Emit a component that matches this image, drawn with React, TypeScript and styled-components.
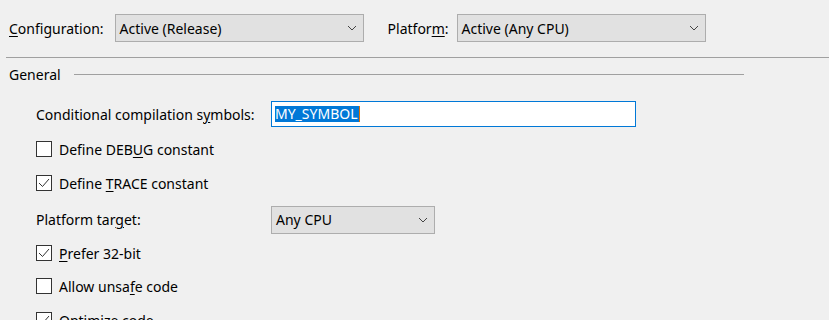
import React from 'react';
import styled, { createGlobalStyle } from 'styled-components';

const GlobalStyle = createGlobalStyle`
  html, body {
    margin: 0;
    padding: 0;
    background: #f0f0f0;
  }
  body {
    font-family: 'Noto Sans', 'Open Sans', sans-serif;
    font-size: 14px;
    color: #000;
  }
  u {
    text-decoration-thickness: 1px;
    text-underline-offset: 2px;
  }
`;

const Page = styled.div`
  width: 829px;
  height: 320px;
  overflow: hidden;
`;

const Toolbar = styled.div`
  display: flex;
  align-items: center;
  height: 28px;
  padding: 14px 0 0 9px;
`;

const ToolLabel = styled.span`
  margin-right: ${(p: { $space: number }) => p.$space}px;
  white-space: nowrap;
`;

const Combo = styled.div<{ $width: number }>`
  box-sizing: border-box;
  display: flex;
  align-items: center;
  justify-content: space-between;
  width: ${(p) => p.$width}px;
  height: 28px;
  padding: 0 6px 0 4px;
  background: #e1e1e1;
  border: 1px solid #adadad;
  margin-right: ${(p) => (p.$width > 200 ? 24 : 0)}px;
`;

const Separator = styled.div`
  height: 1px;
  background: #a0a0a0;
  margin: 15px 0 0 6px;
`;

const GroupHeader = styled.div`
  display: flex;
  align-items: center;
  width: 735px;
  padding: 5px 0 0 9px;
  height: 22px;
  &::after {
    content: '';
    flex: 1;
    height: 1px;
    background: #a0a0a0;
    margin-left: 13px;
    margin-top: 1px;
  }
`;

const Content = styled.div`
  display: flex;
  flex-direction: column;
  padding-left: 36px;
`;

const Row = styled.div<{ $top: number; $height: number }>`
  display: flex;
  align-items: center;
  height: ${(p) => p.$height}px;
  margin-top: ${(p) => p.$top}px;
`;

const FieldLabel = styled.span`
  width: 235px;
  white-space: nowrap;
`;

const TextBox = styled.div`
  box-sizing: border-box;
  display: flex;
  align-items: center;
  width: 365px;
  height: 26px;
  padding: 0 3px;
  background: #fff;
  border: 1px solid #0078d7;
`;

const Selected = styled.span`
  background: #0078d7;
  color: #fff;
  line-height: 16px;
  padding: 0 1px 0 0;
  border-right: 1px solid #e07000;
`;

const Box = styled.span`
  box-sizing: border-box;
  display: inline-flex;
  align-items: center;
  justify-content: center;
  width: 16px;
  height: 16px;
  background: #fff;
  border: 1px solid #333;
  margin-right: 7px;
`;

const Chevron = () => (
  <svg width="10" height="6" viewBox="0 0 10 6">
    <polyline points="1,1 5,5 9,1" fill="none" stroke="#444" strokeWidth="1" />
  </svg>
);

const Check = () => (
  <svg width="12" height="10" viewBox="0 0 12 10">
    <polyline points="1,5 4.5,8.5 11,1" fill="none" stroke="#333" strokeWidth="1" />
  </svg>
);

const CheckRow = ({ checked, top, children }: { checked: boolean; top: number; children: React.ReactNode }) => (
  <Row $top={top} $height={16}>
    <Box>{checked && <Check />}</Box>
    <span>{children}</span>
  </Row>
);

const App = () => {
  return (
    <Page>
      <GlobalStyle />
      <Toolbar>
        <ToolLabel $space={11}>
          <u>C</u>onfiguration:
        </ToolLabel>
        <Combo $width={249}>
          <span>Active (Release)</span>
          <Chevron />
        </Combo>
        <ToolLabel $space={8}>
          Platfor<u>m</u>:
        </ToolLabel>
        <Combo $width={249}>
          <span>Active (Any CPU)</span>
          <Chevron />
        </Combo>
      </Toolbar>
      <Separator />
      <GroupHeader>General</GroupHeader>
      <Content>
        <Row $top={16} $height={26}>
          <FieldLabel>
            Conditional compilation s<u>y</u>mbols:
          </FieldLabel>
          <TextBox>
            <Selected>MY_SYMBOL</Selected>
          </TextBox>
        </Row>
        <CheckRow checked={false} top={14}>
          Define DEB<u>U</u>G constant
        </CheckRow>
        <CheckRow checked top={18}>
          Define <u>T</u>RACE constant
        </CheckRow>
        <Row $top={15} $height={27}>
          <FieldLabel>
            Platform tar<u>g</u>et:
          </FieldLabel>
          <Combo $width={164}>
            <span>Any CPU</span>
            <Chevron />
          </Combo>
        </Row>
        <CheckRow checked top={12}>
          <u>P</u>refer 32-bit
        </CheckRow>
        <CheckRow checked={false} top={17}>
          Allow unsa<u>f</u>e code
        </CheckRow>
        <CheckRow checked top={18}>
          <u>O</u>ptimize code
        </CheckRow>
      </Content>
    </Page>
  );
};

export default App;
